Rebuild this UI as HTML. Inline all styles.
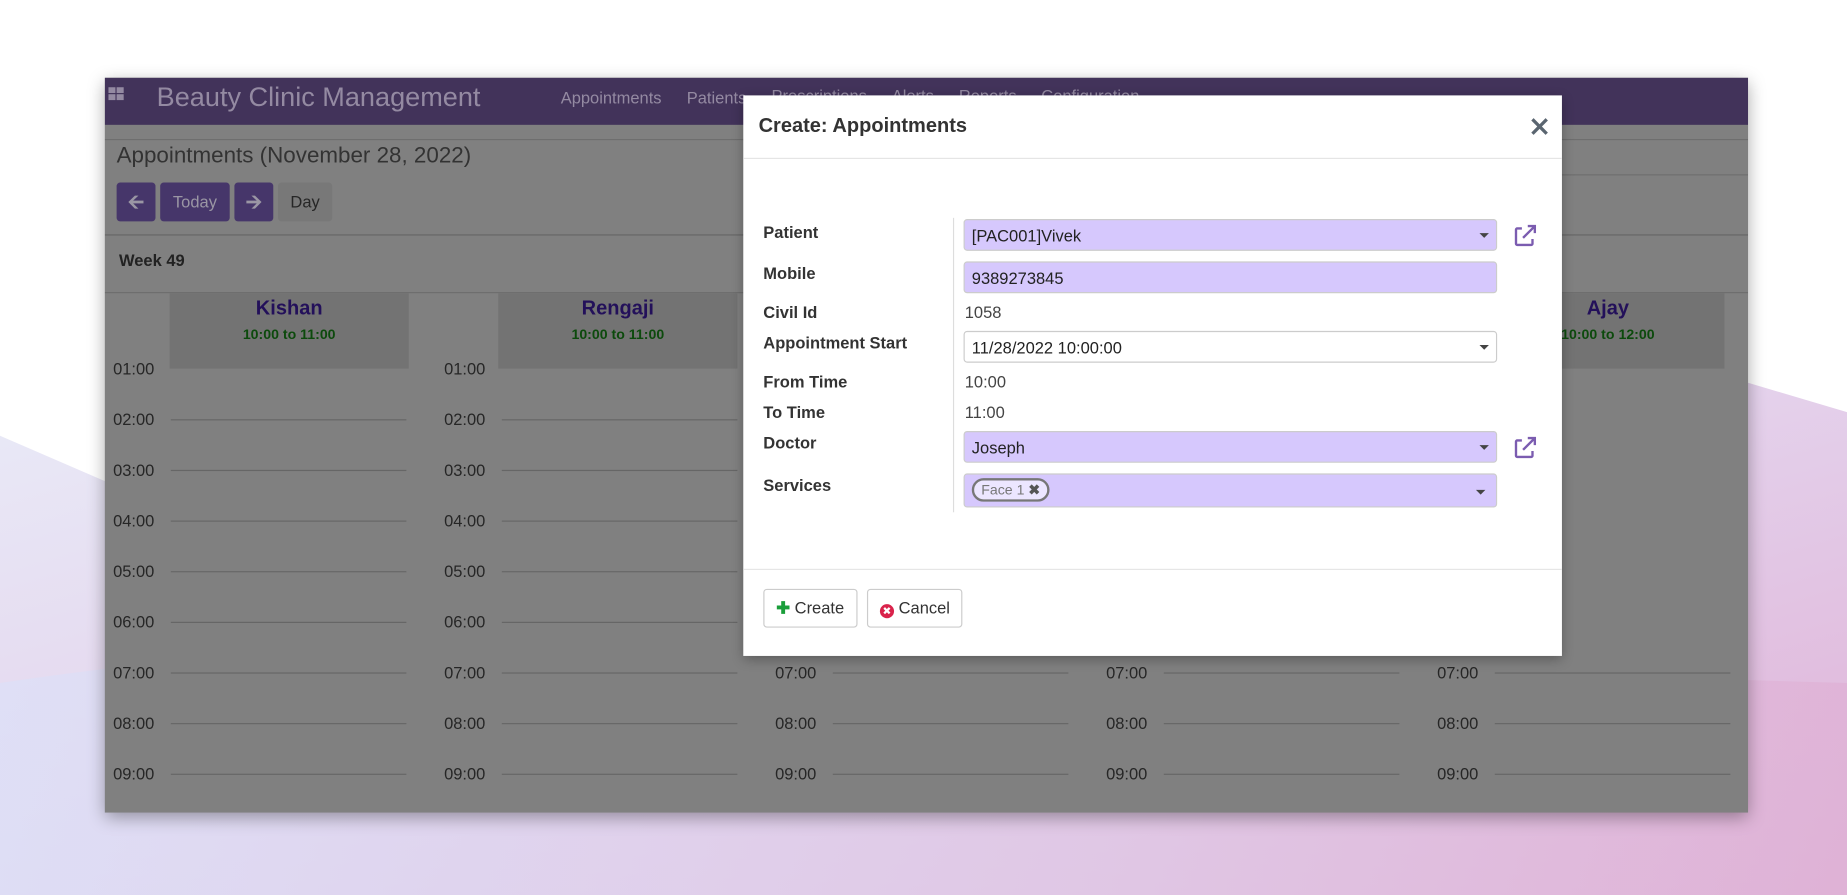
<!DOCTYPE html>
<html><head><meta charset="utf-8"><style>
*{box-sizing:border-box;margin:0;padding:0}
html,body{width:1847px;height:895px;overflow:hidden;background:#fff;font-family:"Liberation Sans",sans-serif}
#w{position:absolute;left:0;top:0;width:1568px;height:760px;transform:scale(1.17793,1.17763);transform-origin:0 0}
.a{position:absolute}
.app{left:89px;top:66px;width:1395px;height:624px;background:#808080;box-shadow:0 4px 14px rgba(0,0,0,.35);overflow:hidden}
.nav{left:0;top:0;width:1395px;height:40px;background:#42335a}
.nav span{position:absolute;color:#948aa2;font-size:14px;top:9px}
.btn{background:#46366a;border-radius:3px;height:33px;top:89px;color:#9a96a4;font-size:14px;text-align:center;line-height:33px}
.hdr{background:#737373;top:183px;width:203px;height:64px;text-align:center}
.hdr b{display:block;color:#23105a;font-size:17px;margin-top:3px}
.hdr i{display:block;font-style:normal;font-weight:bold;color:#0c4a0c;font-size:12px;margin-top:5px}
.tm{font-size:14px;color:#262626}
.ln{height:1px;background:#666;width:200px}
.modal{left:631px;top:81px;width:695px;height:476px;background:#fff}
.fl{position:absolute;left:17px;font-weight:bold;font-size:14px;color:#333}
.fv{position:absolute;left:187px;width:453px;height:27px;background:#d6c8fd;border:1px solid #ccc;border-radius:3px;font-size:14px;color:#222;padding:5px 6px}
.tv{position:absolute;left:188px;font-size:14px;color:#444}
.car{position:absolute;right:6px;top:11px;border-left:4px solid transparent;border-right:4px solid transparent;border-top:4px solid #444}
.mb{position:absolute;top:419px;height:33px;border:1px solid #ccc;border-radius:3px;font-size:14px;color:#333;line-height:31px;padding:0 10px}
</style></head><body><div id="w">
<svg class="a" style="left:0;top:0" width="1568" height="760">
<defs><linearGradient id="g" x1="0" y1="0" x2="1" y2="1"><stop offset="0" stop-color="#e9ecf8"/><stop offset=".5" stop-color="#e4d2ec"/><stop offset="1" stop-color="#dfb0d6"/></linearGradient>
<linearGradient id="g2" x1="0" y1="0" x2="1" y2="0"><stop offset="0" stop-color="#dde0f7"/><stop offset=".6" stop-color="#e0c9e6"/><stop offset="1" stop-color="#dfb2d6"/></linearGradient></defs>
<path d="M0 370 L300 500 L1400 300 L1568 350 L1568 760 L0 760Z" fill="url(#g)"/>
<path d="M0 580 Q400 520 900 560 L1568 580 L1568 760 L0 760Z" fill="url(#g2)" opacity=".8"/>
</svg>
<div class="a app">
<div class="a nav">
<svg class="a" style="left:3px;top:8px" width="14" height="14"><rect x="0" y="0" width="6" height="5" fill="#948aa2"/><rect x="7" y="0" width="6" height="5" fill="#948aa2"/><rect x="0" y="6" width="6" height="5" fill="#948aa2"/><rect x="7" y="6" width="6" height="5" fill="#948aa2"/></svg>
<span style="left:44px;top:3px;font-size:23px">Beauty Clinic Management</span>
<span style="left:387px">Appointments</span><span style="left:494px">Patients</span><span style="left:566px;top:7px">Prescriptions</span><span style="left:668px;top:7px">Alerts</span><span style="left:725px;top:7px">Reports</span><span style="left:795px;top:7px">Configuration</span>
</div>
<div class="a" style="left:10px;top:56px;font-size:19px;color:#333">Appointments (November 28, 2022)</div>
<div class="a btn" style="left:10px;width:33px;font-weight:bold;font-size:17px">&#129128;</div>
<div class="a btn" style="left:47px;width:59px">Today</div>
<div class="a btn" style="left:110px;width:33px;font-weight:bold;font-size:17px">&#129130;</div>
<div class="a btn" style="left:147px;width:46px;background:#787878;color:#262626">Day</div>
<div class="a" style="left:0;top:133px;width:1395px;height:1px;background:#666"></div>
<div class="a" style="left:0;top:52px;width:1395px;height:1px;background:#6e6e6e"></div>
<div class="a" style="left:1050px;top:82px;width:345px;height:1px;background:#6e6e6e"></div>
<div class="a" style="left:12px;top:147px;font-size:14px;font-weight:bold;color:#222">Week 49</div>
<div class="a" style="left:0;top:182px;width:1395px;height:1px;background:#6e6e6e"></div>
<div class="a hdr" style="left:55px"><b>Kishan</b><i>10:00 to 11:00</i></div>
<div class="a hdr" style="left:334px"><b>Rengaji</b><i>10:00 to 11:00</i></div>
<div class="a hdr" style="left:1177px;width:198px"><b>Ajay</b><i>10:00 to 12:00</i></div>
</div>
<div class="a tm" style="left:96px;top:305px">01:00</div><div class="a tm" style="left:377px;top:305px">01:00</div>
<div class="a modal" style="box-shadow:0 3px 10px rgba(0,0,0,.3)">
<div class="a" style="left:13px;top:16px;font-size:17px;font-weight:bold;color:#333">Create: Appointments</div>
<div class="a" style="left:666px;top:12px;font-size:24px;font-weight:bold;color:#5a6570;font-family:'DejaVu Sans',sans-serif">&#215;</div>
<div class="a" style="left:0;top:53px;width:695px;height:1px;background:#e5e5e5"></div>
<div class="a" style="left:178px;top:104px;width:1px;height:250px;background:#ddd"></div>
<div class="fl" style="top:108px">Patient</div>
<div class="fv" style="top:105px">[PAC001]Vivek<div class="car"></div></div>
<div class="fl" style="top:143px">Mobile</div>
<div class="fv" style="top:141px">9389273845</div>
<div class="fl" style="top:176px">Civil Id</div><div class="tv" style="top:176px">1058</div>
<div class="fl" style="top:202px">Appointment Start</div>
<div class="fv" style="top:200px;background:#fff">11/28/2022 10:00:00<div class="car"></div></div>
<div class="fl" style="top:235px">From Time</div><div class="tv" style="top:235px">10:00</div>
<div class="fl" style="top:261px">To Time</div><div class="tv" style="top:261px">11:00</div>
<div class="fl" style="top:287px">Doctor</div>
<div class="fv" style="top:285px">Joseph<div class="car"></div></div>
<div class="fl" style="top:323px">Services</div>
<div class="fv" style="top:321px;height:29px;padding:3px 6px"><span style="display:inline-block;border:2px solid #777;border-radius:10px;font-size:12px;color:#777;padding:1px 6px;background:#ece6ff">Face 1 <b style="color:#555">&#10006;</b></span><div class="car" style="top:13px;right:9px"></div></div>
<svg class="a" style="left:652px;top:108px" width="22" height="22" fill="none" stroke="#7b5cb0" stroke-width="2"><path d="M9 5H5a1 1 0 0 0-1 1v12a1 1 0 0 0 1 1h12a1 1 0 0 0 1-1v-4"/><path d="M10 13L19 4M14 3h6v6"/></svg>
<svg class="a" style="left:652px;top:288px" width="22" height="22" fill="none" stroke="#7b5cb0" stroke-width="2"><path d="M9 5H5a1 1 0 0 0-1 1v12a1 1 0 0 0 1 1h12a1 1 0 0 0 1-1v-4"/><path d="M10 13L19 4M14 3h6v6"/></svg>
<div class="a" style="left:0;top:402px;width:695px;height:1px;background:#e5e5e5"></div>
<div class="mb" style="left:17px"><b style="color:#1a9e3a">&#10010;</b> Create</div>
<div class="mb" style="left:105px"><span style="display:inline-block;width:12px;height:12px;border-radius:50%;background:#d9234b;color:#fff;font-size:9px;line-height:12px;text-align:center;vertical-align:-1px">&#10006;</span> Cancel</div>
</div>
</div>
<script>
var w=document.getElementById('w'),h='';
var xs=[96,377,658,939,1220];
for(var r=0;r<9;r++){var y=305+r*43;for(var c=0;c<5;c++){
 if(c>=2&&y<560)continue;
 if(r==0)continue;
 h+='<div class="a tm" style="left:'+xs[c]+'px;top:'+y+'px">0'+(r+1)+':00</div>';
 h+='<div class="a ln" style="left:'+(xs[c]+49)+'px;top:'+(y+8)+'px"></div>';}}
var d=document.createElement('div');d.innerHTML=h;
w.insertBefore(d,w.querySelector('.modal'));
</script>
</body></html>
